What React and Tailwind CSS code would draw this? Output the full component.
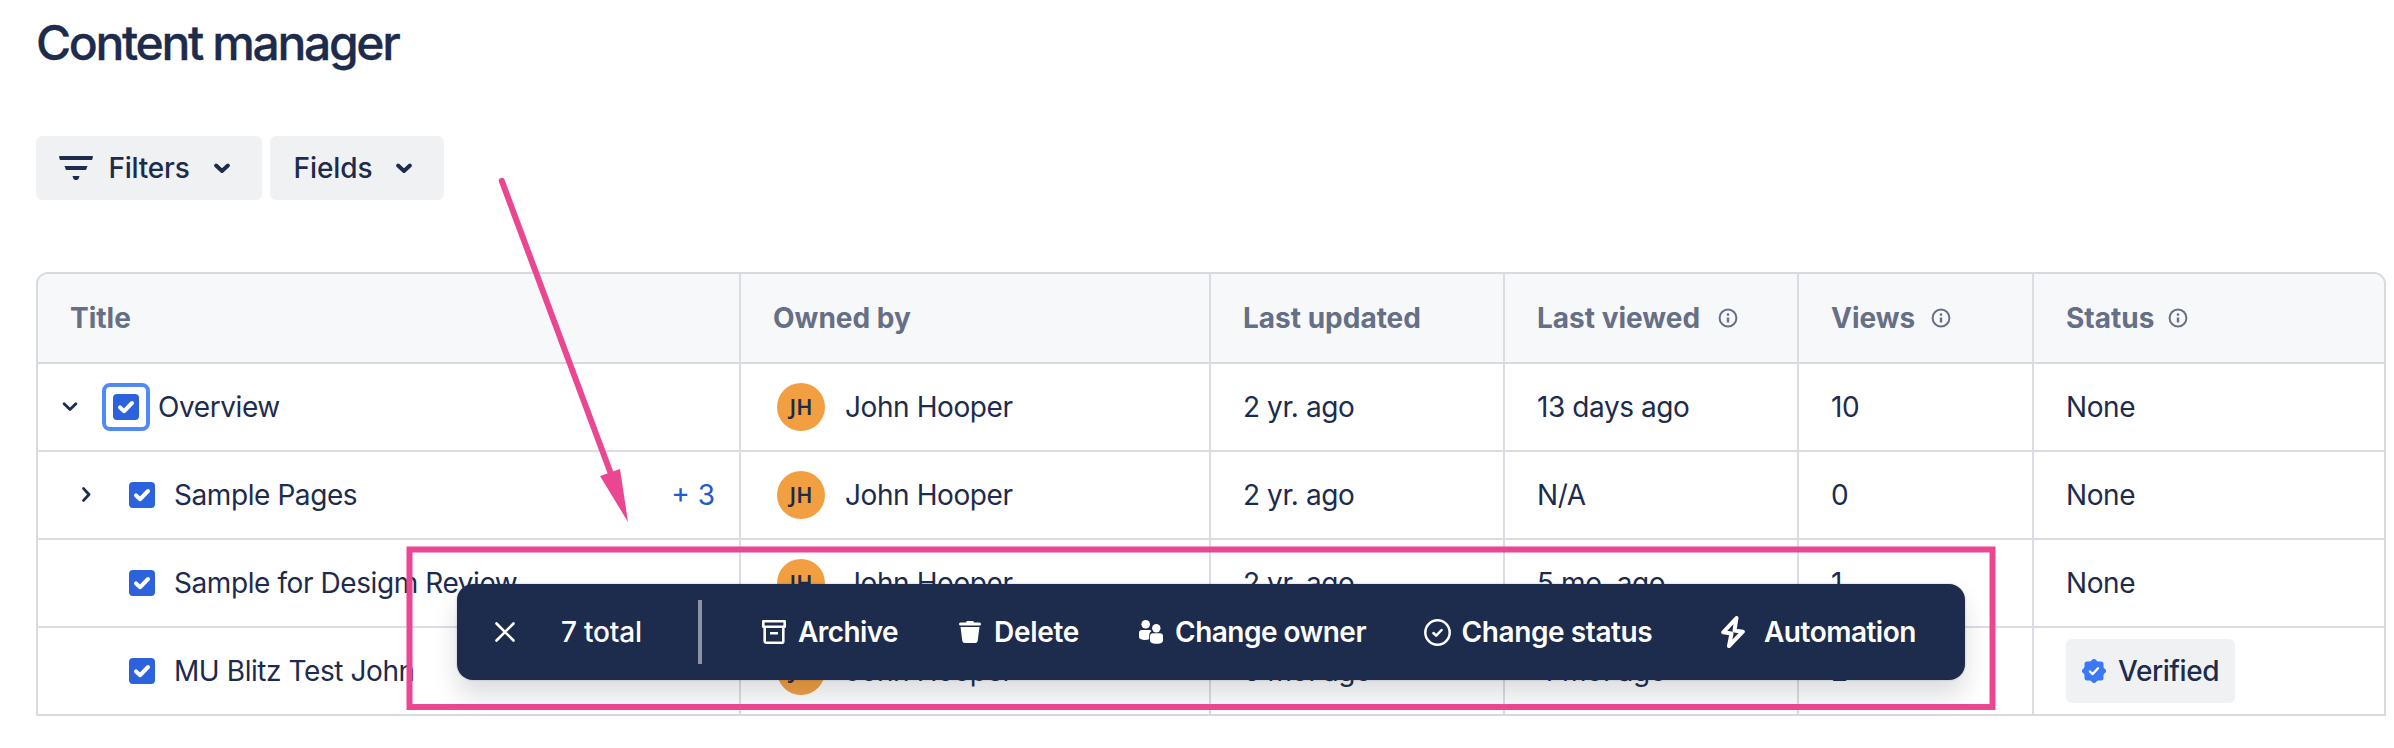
import React from "react";

const cell = "flex items-center pl-8 whitespace-nowrap";
const cols = "grid grid-cols-[703px_470px_294px_294px_235px_350px]";
const line = "border-r-2 border-[#dcdde4]";

const chevrons = {
  menu: { d: "M2.1 5.500 8 11 13.900 5.500", w: 3.9 },
  down: { d: "M2.1 4.700 8 10.500 13.900 4.700", w: 2.8 },
  right: { d: "M5.600 1.600 11 7.500 5.600 13.400", w: 2.8 },
};

function Chevron({ kind, className = "" }) {
  return (
    <svg width="16" height="16" viewBox="0 0 16 16" fill="none" stroke="currentColor" strokeLinecap="round" strokeLinejoin="round" strokeWidth={chevrons[kind].w} className={className}>
      <path d={chevrons[kind].d} />
    </svg>
  );
}

function Checkbox() {
  return (
    <svg width="26" height="26" viewBox="0 0 26 26" fill="none" className="shrink-0">
      <rect width="26" height="26" rx="4" fill="#2c63dc" />
      <path d="M7 13.4 11.2 17.2 19 9" stroke="#fff" strokeWidth="4" strokeLinecap="round" strokeLinejoin="round" />
    </svg>
  );
}

function Info({ className }) {
  return (
    <svg width="20" height="20" viewBox="0 0 20 20" fill="none" className={className}>
      <circle cx="10" cy="10" r="8.400" stroke="currentColor" strokeWidth="2" />
      <circle cx="10" cy="6.600" r="1.300" fill="currentColor" />
      <path d="M10 9.400v5" stroke="currentColor" strokeWidth="2.400" />
    </svg>
  );
}

function Owner() {
  return (
    <div className={`${cell} ${line}`}>
      <span className="ml-1 flex size-12 items-center justify-center rounded-full bg-[#f19f41] font-['Noto_Sans',sans-serif] text-[21.5px] font-semibold tracking-normal">JH</span>
      <span className="ml-5">John Hooper</span>
    </div>
  );
}

const rows = [
  { title: "Overview", updated: "2 yr. ago", viewed: "13 days ago", views: "10", status: "None" },
  { title: "Sample Pages", updated: "2 yr. ago", viewed: "N/A", views: "0", status: "None", extra: "+ 3" },
  { title: "Sample for Desigm Review", updated: "2 yr. ago", viewed: "5 mo. ago", views: "1", status: "None" },
  { title: "MU Blitz Test John", updated: "6 mo. ago", viewed: "4 mo. ago", views: "2", status: "Verified" },
];

function TitleCell({ row, index }) {
  if (index === 0) {
    return (
      <div className={`flex items-center whitespace-nowrap pl-6 ${line}`}>
        <Chevron kind="down" />
        <span className="ml-6 flex size-12 items-center justify-center rounded-lg border-4 border-[#5089f8]">
          <Checkbox />
        </span>
        <span className="ml-2">{row.title}</span>
      </div>
    );
  }
  return (
    <div className={`flex items-center whitespace-nowrap pl-10 pr-6 ${line}`}>
      <span className="flex w-[51px]">{index === 1 && <Chevron kind="right" />}</span>
      <Checkbox />
      <span className="ml-[19px]">{row.title}</span>
      {row.extra && <span className="ml-auto tracking-normal text-[#2459cf]">{row.extra}</span>}
    </div>
  );
}

function Status({ value }) {
  if (value !== "Verified") return value;
  return (
    <span className="flex h-16 w-[169px] items-center rounded-md bg-[#f0f1f3] pl-4 font-medium">
      <svg width="24" height="24" viewBox="0 0 24 24" fill="none">
        <rect x="2.500" y="2.500" width="19" height="19" rx="2.500" fill="#3b78f6" />
        <rect x="2.800" y="2.800" width="18.400" height="18.400" rx="2.500" fill="#3b78f6" transform="rotate(45 12 12)" />
        <path d="M8 12.600 10.700 15 16 9.200" stroke="#fff" strokeWidth="2.400" strokeLinecap="round" strokeLinejoin="round" />
      </svg>
      <span className="ml-3">{value}</span>
    </span>
  );
}

export default function App() {
  return (
    <div className="relative h-[748px] w-[2394px] overflow-hidden bg-white pl-9 font-['Inter',sans-serif] text-[28px] leading-10 tracking-[-0.42px] text-[#1d2b4d]">
      <h1 className="pt-[14px] text-[48px] font-medium leading-[58px] tracking-[-2.35px] [-webkit-text-stroke:0.3px_#1d2b4d]">Content manager</h1>

      <div className="mt-16 flex gap-2 font-medium tracking-[-0.1px]">
        <button className="flex h-16 w-[226px] items-center rounded-md bg-[#f0f1f3] pl-[23px]">
          <svg width="34" height="24" viewBox="0 0 34 24" fill="currentColor">
            <path d="M1 0h32a1 1 0 0 1 1 1l-1 3H1L0 1a1 1 0 0 1 1-1zM5.500 10h23l-1.500 4H7zM13.500 20h7l-1 3-1.500 1h-2l-1.500-1z" />
          </svg>
          <span className="ml-[14px] w-[84px] tracking-[-0.2px]">Filters</span>
          <Chevron kind="menu" className="ml-[23px]" />
        </button>
        <button className="flex h-16 w-[174px] items-center rounded-md bg-[#f0f1f3] pl-[23px]">
          <span className="w-20">Fields</span>
          <Chevron kind="menu" className="ml-[23px]" />
        </button>
      </div>

      <div className="mt-[72px] w-[2350px] overflow-hidden rounded-t-xl border-2 border-[#d8dae1]">
        <div className={`${cols} h-[90px] border-b-2 border-[#d8dae1] bg-[#f7f8fa] font-bold tracking-normal text-[#656f86]`}>
          <div className={`${cell} ${line}`}>Title</div>
          <div className={`${cell} ${line}`}>Owned by</div>
          <div className={`${cell} ${line}`}>Last updated</div>
          <div className={`${cell} ${line}`}>Last viewed<Info className="ml-[18px]" /></div>
          <div className={`${cell} ${line}`}>Views<Info className="ml-4" /></div>
          <div className={cell}>Status<Info className="ml-[14px]" /></div>
        </div>
        {rows.map((row, i) => (
          <div key={row.title} className={`${cols} ${i === 3 ? "h-[86px]" : "h-[88px] border-b-2"} border-[#dcdde4]`}>
            <TitleCell row={row} index={i} />
            <Owner />
            <div className={`${cell} ${line}`}>{row.updated}</div>
            <div className={`${cell} ${line}`}>{row.viewed}</div>
            <div className={`${cell} ${line}`}>{row.views}</div>
            <div className={cell}><Status value={row.status} /></div>
          </div>
        ))}
      </div>

      <div className="absolute left-[457px] top-[584px] flex h-24 w-[1508px] items-center whitespace-nowrap rounded-2xl bg-[#1d2b4d] font-semibold tracking-[-0.5px] text-white shadow-[0_16px_24px_rgba(30,33,50,0.15),0_0_2px_rgba(30,33,50,0.31)]">
        <svg width="20" height="20" viewBox="0 0 20 20" stroke="currentColor" strokeWidth="2.600" strokeLinecap="round" className="ml-[38px]">
          <path d="M1.500 1.500l17 17M18.500 1.500l-17 17" />
        </svg>
        <span className="ml-[46px] w-[137px] font-medium tracking-[-0.2px]">7 total</span>
        <span className="h-16 w-1 bg-[#8b93a5]" />
        <svg width="24" height="24" viewBox="0 0 24 24" fill="none" stroke="currentColor" strokeWidth="2.600" strokeLinejoin="round" className="ml-[60px]">
          <path d="M1.300 1.300h21.400v5.400H1.300zM2.700 6.700v14.500a1.500 1.500 0 0 0 1.500 1.500h15.600a1.500 1.500 0 0 0 1.500-1.500V6.700M8 13.300h8" />
        </svg>
        <span className="ml-3 w-[161px] tracking-[-0.6px]">Archive</span>
        <svg width="22" height="22" viewBox="0 0 22 22" fill="currentColor">
          <path d="M7 1.500Q7 0 8.500 0h5Q15 0 15 1.500h5.500a1.500 1.500 0 0 1 0 3h-19a1.500 1.500 0 0 1 0-3zM1.500 6h19L18.700 19.800a2.500 2.500 0 0 1-2.500 2.200H5.800a2.500 2.500 0 0 1-2.500-2.200z" />
        </svg>
        <span className="ml-[13px] w-[145px] tracking-[-0.3px]">Delete</span>
        <svg width="24" height="24" viewBox="0 0 24 24" fill="currentColor">
          <circle cx="6.700" cy="4.300" r="4.300" />
          <circle cx="17.300" cy="8.200" r="4.200" />
          <path d="M3 10h7.500a2.500 2.500 0 0 1 2 1 5 5 0 0 0-2.300 4v4.300q-2.500 1-5.200.7l-3-.7A2.600 2.600 0 0 1 0 17v-4a3 3 0 0 1 3-3z" />
          <path d="M14 13.300h7a3 3 0 0 1 3 3v4.200a2.600 2.600 0 0 1-1.800 2.500q-4.700 1.700-9.400 0a2.600 2.600 0 0 1-1.800-2.500v-4.200a3 3 0 0 1 3-3z" />
        </svg>
        <span className="ml-3 w-[249px]">Change owner</span>
        <svg width="27" height="27" viewBox="0 0 27 27" fill="none" stroke="currentColor" strokeWidth="2.500" strokeLinecap="round" strokeLinejoin="round">
          <circle cx="13.500" cy="13.500" r="12.200" />
          <path d="M9.400 14 12.200 16.600 17.600 11" />
        </svg>
        <span className="ml-[10.5px] w-[259.5px] tracking-[-0.4px]">Change status</span>
        <svg width="24" height="32" viewBox="0 0 24 32" fill="none" stroke="currentColor" strokeWidth="4" strokeLinejoin="round">
          <path d="M15.500 2 2.200 16.300 10.500 17.500 8 30 21.800 15.700 13.500 14.500z" />
        </svg>
        <span className="ml-[19px]">Automation</span>
      </div>

      <svg width="2394" height="748" className="absolute left-0 top-0" fill="none" stroke="#eb4691" strokeWidth="6">
        <rect x="409.500" y="549.500" width="1583" height="157.500" />
        <path d="M501.800 180.900 611 474" strokeLinecap="round" />
        <path d="M600 476 620 469 628 522z" fill="#eb4691" stroke="none" />
      </svg>
    </div>
  );
}
